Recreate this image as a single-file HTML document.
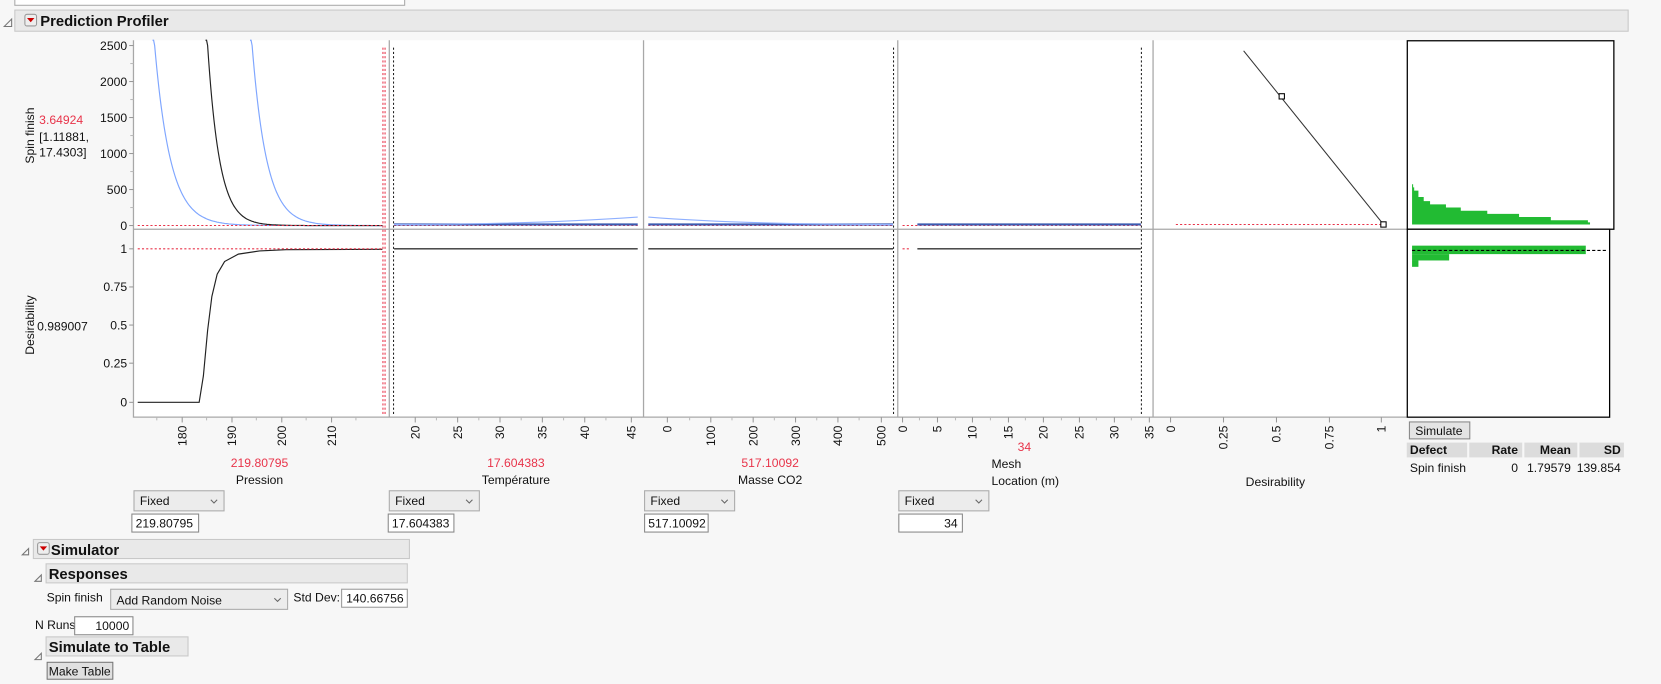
<!DOCTYPE html>
<html><head><meta charset="utf-8"><style>
html,body{margin:0;padding:0;background:#f7f7f7;width:1661px;height:684px;overflow:hidden}
svg{display:block}
text{font-family:"Liberation Sans",sans-serif;font-size:11.5px;fill:#111}
.r{fill:#e8344a}
.b{font-weight:bold;font-size:14px}
</style></head><body>
<svg id="s" width="1661" height="684" viewBox="0 0 1568 646" preserveAspectRatio="none" xmlns="http://www.w3.org/2000/svg">
<rect width="1568" height="646" fill="#f7f7f7"/>
<rect x="14" y="-2" width="368" height="7" fill="#fff" stroke="#aaa"/>
<rect x="14" y="9.5" width="1523" height="20" fill="#e9e9e9" stroke="#c8c8c8"/>
<path d="M4 25 L11 18 L11 25 Z" fill="none" stroke="#777"/>
<rect x="23.5" y="13.5" width="11" height="11" rx="2" fill="#eee" stroke="#999"/><path d="M25.5 17 L32.5 17 L29 21 Z" fill="#c00"/>
<text x="38" y="24.5" class="b">Prediction Profiler</text>
<rect x="126" y="38" width="1202" height="356" fill="#fff"/>
<g stroke="#a8a8a8" stroke-width="1.2" fill="none">
<path d="M126 38 V394 H1328"/>
<path d="M126 216.5 H1328"/>
<path d="M367.5 38 V394 M607.5 38 V394 M847.5 38 V394 M1088.5 38 V394"/>
</g>
<rect x="1328.5" y="38.5" width="195" height="178" fill="#fff" stroke="#000" stroke-width="1.2"/>
<rect x="1328.5" y="216.5" width="191" height="177.5" fill="#fff" stroke="#000" stroke-width="1.2"/>
<g id="g"></g>
<text x="245" y="441" class="r" text-anchor="middle">219.80795</text>
<text x="245" y="457" text-anchor="middle">Pression</text>
<text x="487" y="441" class="r" text-anchor="middle">17.604383</text>
<text x="487" y="457" text-anchor="middle">Température</text>
<text x="727" y="441" class="r" text-anchor="middle">517.10092</text>
<text x="727" y="457" text-anchor="middle">Masse CO2</text>
<text x="967" y="426" class="r" text-anchor="middle">34</text>
<text x="936" y="442">Mesh</text>
<text x="936" y="458">Location (m)</text>
<text x="1204" y="459" text-anchor="middle">Desirability</text>
<text transform="translate(32,128) rotate(-90)" text-anchor="middle">Spin finish</text>
<text x="37" y="117" class="r">3.64924</text>
<text x="37" y="133">[1.11881,</text>
<text x="37" y="148">17.4303]</text>
<text transform="translate(32,307) rotate(-90)" text-anchor="middle">Desirability</text>
<text x="35" y="312">0.989007</text>
<g id="ctl"></g>
<rect x="1330.5" y="398.5" width="57" height="16" fill="#e4e4e4" stroke="#888"/>
<text x="1336" y="411">Simulate</text>
<rect x="1328" y="418" width="57" height="14" fill="#dcdcdc"/>
<rect x="1387" y="418" width="50" height="14" fill="#dcdcdc"/>
<rect x="1439" y="418" width="50" height="14" fill="#dcdcdc"/>
<rect x="1491" y="418" width="42" height="14" fill="#dcdcdc"/>
<text x="1331" y="429" style="font-weight:bold">Defect</text>
<text x="1433" y="429" text-anchor="end" style="font-weight:bold">Rate</text>
<text x="1483" y="429" text-anchor="end" style="font-weight:bold">Mean</text>
<text x="1530" y="429" text-anchor="end" style="font-weight:bold">SD</text>
<text x="1331" y="446">Spin finish</text>
<text x="1433" y="446" text-anchor="end">0</text>
<text x="1483" y="446" text-anchor="end">1.79579</text>
<text x="1530" y="446" text-anchor="end">139.854</text>
<rect x="31.5" y="509.5" width="355" height="18" fill="#e9e9e9" stroke="#c8c8c8"/>
<path d="M21 524 L27 518 L27 524 Z" fill="none" stroke="#777"/>
<rect x="35.5" y="512.5" width="11" height="11" rx="2" fill="#eee" stroke="#999"/><path d="M37.5 516 L44.5 516 L41 520 Z" fill="#c00"/>
<text x="48" y="524" class="b">Simulator</text>
<path d="M33 549 L39 543 L39 549 Z" fill="none" stroke="#777"/>
<rect x="43.5" y="532.5" width="341" height="18" fill="#e9e9e9" stroke="#c8c8c8"/>
<text x="46" y="547" class="b">Responses</text>
<text x="44" y="568">Spin finish</text>
<rect x="104.5" y="556.5" width="167" height="19" fill="#ececec" stroke="#aaa"/>
<text x="110" y="571">Add Random Noise</text>
<path d="M259 565 L262 568 L265 565" stroke="#666" fill="none"/>
<text x="277" y="568">Std Dev:</text>
<rect x="322.5" y="556.5" width="62" height="17" fill="#fff" stroke="#999"/>
<text x="381" y="569" text-anchor="end">140.66756</text>
<text x="33" y="594">N Runs:</text>
<rect x="70.5" y="582.5" width="55" height="17" fill="#fff" stroke="#888"/>
<text x="122" y="595" text-anchor="end">10000</text>
<path d="M33 623 L39 617 L39 623 Z" fill="none" stroke="#777"/>
<rect x="43.5" y="601.5" width="134" height="18" fill="#e9e9e9" stroke="#c8c8c8"/>
<text x="46" y="616" class="b">Simulate to Table</text>
<rect x="44.5" y="625.5" width="62" height="16" fill="#e0e0e0" stroke="#777"/>
<text x="46" y="638">Make Table</text>
</svg>
<script>
var NS="http://www.w3.org/2000/svg",g=document.getElementById('g'),c=document.getElementById('ctl');
function el(p,t,a,txt){var e=document.createElementNS(NS,t);for(var k in a)e.setAttribute(k,a[k]);if(txt!=null)e.textContent=txt;p.appendChild(e);return e;}
function line(d,st,w,da){var a={d:d,stroke:st,'stroke-width':w||1,fill:'none'};if(da)a['stroke-dasharray']=da;el(g,'path',a);}
[[2500,43],[2000,77],[1500,111],[1000,145],[500,179],[0,213]].forEach(function(a){el(g,'text',{x:120,y:a[1]+4,'text-anchor':'end'},a[0]);line('M122 '+a[1]+' H126','#999');});
[60,94,128,162,196].forEach(function(y){line('M123 '+y+' H126','#bbb');});
[['1',235],['0.75',271],['0.5',307],['0.25',343],['0',380]].forEach(function(a){el(g,'text',{x:120,y:a[1]+4,'text-anchor':'end'},a[0]);line('M122 '+a[1]+' H126','#999');});
function curve(x0,k,col){var d='';for(var x=x0-2;x<=361;x+=1){var v=2500*Math.exp(-(x-x0)/k);var y=213-v*0.068;if(y<38)y=38;d+=(d?'L':'M')+x+' '+y.toFixed(1);}line(d,col,1.1);}
curve(146,14.9,'#7fa6ff');curve(238,13.7,'#7fa6ff');curve(196,11.2,'#222');
line('M130 380 L188 380 L192 355 L196 312 L200 280 L205 259 L212 247 L225 240 L245 237 L270 235.8 L361 235.5','#222',1.1);
line('M130 213 H361 M372 213 H602 M612 213 H843 M852 213 H1077','#e8344a',1,'2,2');
line('M130 235 H361','#e8344a',1,'2,2');line('M852 235 H860','#e8344a',1,'2,2');
line('M361.5 45 V392 M363.5 45 V392','#e8344a',1,'2,2');
line('M371.5 45 V392','#222',1,'2,2');
line('M843.5 45 V392 M1077.5 45 V392','#222',1,'2,2');
line('M372 212 H602','#3b5bb0',2);line('M612 212 H843','#3b5bb0',2);line('M866 212 H1077','#3b5bb0',2);
line('M372 212 Q500 212 602 205','#8fb0ff',1);line('M612 205 Q700 212 843 212','#8fb0ff',1);
line('M372 235 H602 M612 235 H843 M866 235 H1077','#333',1.3);
line('M1174 48 L1306 212','#333',1);line('M1110 212 H1306','#e8344a',1,'2,2');
el(g,'rect',{x:1207.5,y:88.5,width:5,height:5,fill:'#fff',stroke:'#000'});
el(g,'rect',{x:1303.5,y:209.5,width:5,height:5,fill:'#fff',stroke:'#000'});
el(g,'path',{d:'M1333 212 L1333 174 L1334 174 L1334 177 L1335 177 L1335 180 L1339 180 L1339 186 L1344 186 L1344 190 L1350 190 L1350 193 L1365 193 L1365 196 L1379 196 L1379 199 L1404 199 L1404 202 L1434 202 L1434 205 L1464 205 L1464 208 L1499 208 L1499 210 L1501 210 L1501 212 Z',fill:'#22bb33'});
el(g,'rect',{x:1333,y:232,width:164,height:8,fill:'#22bb33'});
el(g,'rect',{x:1333,y:240,width:35,height:6,fill:'#22bb33'});
el(g,'rect',{x:1333,y:246,width:6,height:6,fill:'#22bb33'});
line('M1333 236.5 H1517','#000',1,'3,2');
function xt(list,minor){list.forEach(function(a){line('M'+a[1]+' 394 V399','#999');el(g,'text',{transform:'translate('+(a[1]+4)+',402) rotate(-90)','text-anchor':'end'},a[0]);});(minor||[]).forEach(function(x){line('M'+x+' 394 V397','#bbb');});}
xt([['180',172],['190',219],['200',266],['210',313]],[148,195,242,289,336]);
xt([['20',392],['25',432],['30',472],['35',512],['40',552],['45',596]],[412,452,492,532,572]);
xt([['0',630],['100',671],['200',711],['300',751],['400',791],['500',832]],[651,691,731,771,811]);
xt([['0',852],['5',885],['10',918],['15',952],['20',985],['25',1019],['30',1052],['35',1085]],[868,902,935,968,1002,1035,1068]);
xt([['0',1105],['0.25',1155],['0.5',1205],['0.75',1255],['1',1304]]);
[[126,124,'219.80795',187,'s'],[367,366,'17.604383',428,'s'],[608,608,'517.10092',668,'s'],[848,848,'34',908,'e']].forEach(function(a){
 el(c,'rect',{x:a[0]+.5,y:463.5,width:85,height:19,fill:'#ececec',stroke:'#aaa'});
 el(c,'text',{x:a[0]+6,y:477},'Fixed');
 el(c,'path',{d:'M'+(a[0]+73)+' 472 l3 3 l3 -3',stroke:'#666',fill:'none'});
 el(c,'rect',{x:a[1]+.5,y:485.5,width:a[3]-a[1],height:17,fill:'#fff',stroke:'#888'});
 if(a[4]=='s')el(c,'text',{x:a[1]+4,y:498},a[2]);else el(c,'text',{x:a[3]-4,y:498,'text-anchor':'end'},a[2]);
});
</script>
</body></html>
